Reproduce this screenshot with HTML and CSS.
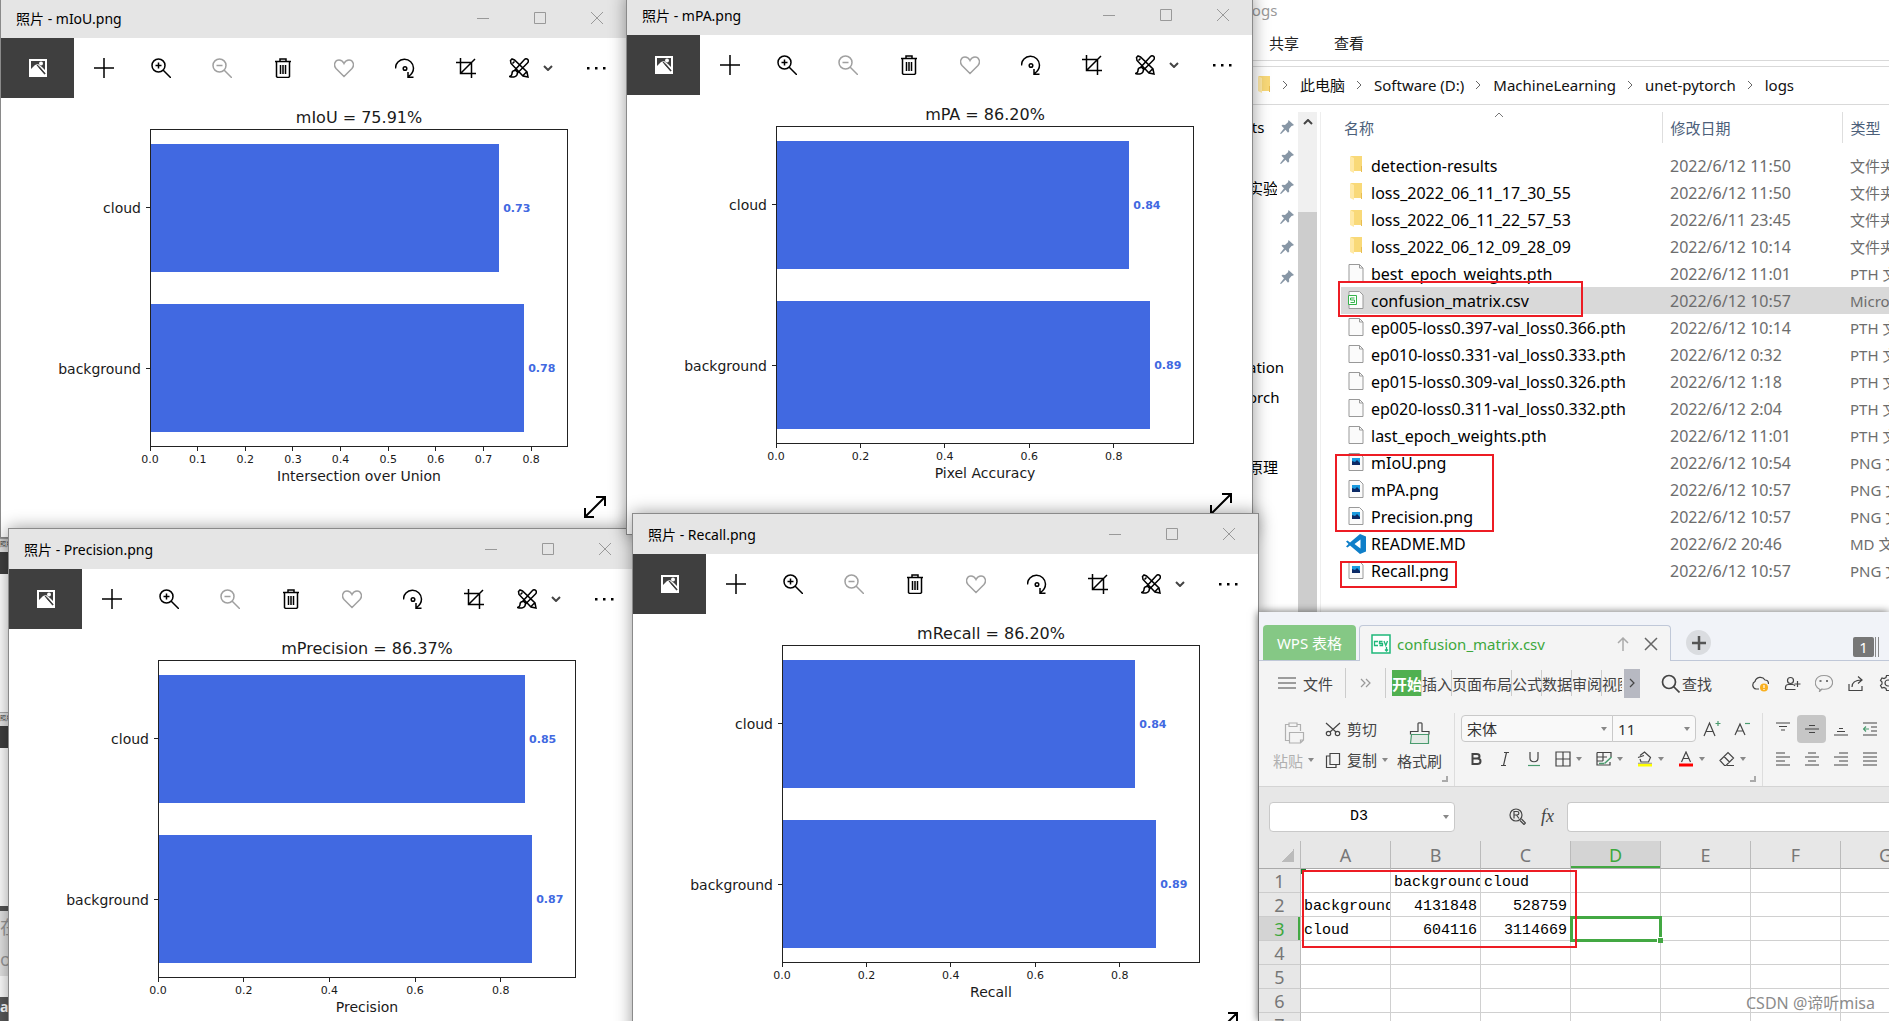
FILE: index.html
```html
<!DOCTYPE html>
<html lang="zh-CN">
  <head>
    <meta charset="UTF-8" />
    <meta name="viewport" content="width=device-width, initial-scale=1.0" />
    <title>logs</title>
    <link rel="stylesheet" href="styles.css">
  </head>
  <body>
    <!-- Shared icons -->
    <svg class="sprite" aria-hidden="true">
      <symbol id="i-min" viewBox="0 0 12 12"><path d="M0 6.5h12" /></symbol>
      <symbol id="i-max" viewBox="0 0 12 12"><path d="M.5.5h11v11H.5z" /></symbol>
      <symbol id="i-close" viewBox="0 0 12 12"><path d="M0 0l12 12M12 0L0 12" /></symbol>
      <symbol id="i-photo" viewBox="0 0 18 18">
        <path fill="#fff" stroke="none" d="M0 0h18v18H0z" />
        <path fill="#3f3f3f" stroke="none" d="M2 2h14v9l-3-3L9 5 6 6 2 10z" />
        <circle cx="12" cy="4.500" r="2" fill="#fff" stroke="none" />
        <path stroke="#3f3f3f" stroke-width="1.300" d="M8 6l8 9" />
        <path fill="#fff" stroke="none" d="M2 11l5-5 9 10H2z" />
        <path stroke="#3f3f3f" stroke-width="1.200" d="M10 8l6 7" />
      </symbol>
      <symbol id="i-plus" viewBox="0 0 20 20"><path d="M10 0v20M0 10h20" /></symbol>
      <symbol id="i-zoomin" viewBox="0 0 20 20"><circle cx="7.500" cy="7.500" r="6.500" /><path d="M12 12l8 8M4.500 7.500h6M7.500 4.500v6" /></symbol>
      <symbol id="i-zoomout" viewBox="0 0 20 20"><circle cx="7.500" cy="7.500" r="6.500" /><path d="M12 12l8 8M4.500 7.500h6" /></symbol>
      <symbol id="i-trash" viewBox="0 0 20 20"><path d="M2 3.500h16M7 3V1h6v2M3.500 4v14.500l1 1h11l1-1V4M7.500 7v9M10 7v9M12.500 7v9" /></symbol>
      <symbol id="i-heart" viewBox="0 0 20 20"><path d="M10 18.500L2 10.500C-1 7 1 2 5 2c2.500 0 4 1.500 5 3.500C11 3.500 12.500 2 15 2c4 0 6 5 3 8.500z" /></symbol>
      <symbol id="i-rotate" viewBox="0 0 20 20"><path d="M.5 10.500A9 9 0 0 1 18.500 10c0 4-2 6.500-5 8.500M13 14v5.200h5.500" /><circle cx="10" cy="10.500" r="1.800" /></symbol>
      <symbol id="i-crop" viewBox="0 0 20 20"><path d="M0 4.500h15.500V20M4.500 0v15.500H20M5 15L19 1" /></symbol>
      <symbol id="i-pens" viewBox="0 0 20 20"><path d="M1.500 2.500L3 1l2.500 1L18 14l1 5-5-1L2 5.500zM3.500 5.500l2-2M14 17.500l3.500-3.500M18 1c2 1 1.500 3 .5 4L9 14.500 6 12 15.500 1.500C16 1 17 .5 18 1zM6 12.500c-2 0-3 1-3 3 0 1.500-1 2.500-2.500 3 4 1.500 8 0 8-4" /></symbol>
      <symbol id="i-down" viewBox="0 0 10 6"><path d="M1 1l4 4 4-4" /></symbol>
      <symbol id="i-dots" viewBox="0 0 20 4"><path fill="currentColor" stroke="none" d="M1 1h2.500v2.500H1zM9 1h2.500v2.500H9zM17 1h2.500v2.500H17z" /></symbol>
      <symbol id="i-expand" viewBox="0 0 24 24"><path d="M2 22L22 2M13 2h9v9M11 22H2v-9" /></symbol>

      <symbol id="i-folder" viewBox="0 0 14 18"><path fill="#f9d978" stroke="none" d="M2 0h11v15H2z" /><path fill="#ffe9a6" stroke="none" d="M1 0l4 2v15l-4-2z" /><path fill="#e8bd52" stroke="none" d="M12 10h1v6h-1z" /></symbol>
      <symbol id="i-file" viewBox="0 0 16 18"><path fill="#fbfbfb" stroke="#999" d="M1 .5h10.500l3.500 3.500v13.500H1z" /><path stroke="#999" d="M11.500.5V4H15" /></symbol>
      <symbol id="i-csv" viewBox="0 0 16 18"><path fill="#fbfbfb" stroke="#999" d="M1 .5h10.500l3.500 3.500v13.500H1z" /><path fill="#fff" stroke="#35b34a" d="M.5 4.500h8v9h-8z" /><path stroke="#35b34a" d="M6.500 7h-4v2h4v2.500h-4" /></symbol>
      <symbol id="i-png" viewBox="0 0 16 18"><path fill="#fbfbfb" stroke="#999" d="M1 .5h10.500l3.500 3.500v13.500H1z" /><path fill="#1b9be0" stroke="none" d="M4 5h8v7H4z" /><path fill="#0c2a66" stroke="none" d="M4 12V8l3 1 2-2 3 3v2z" /></symbol>
      <symbol id="i-vscode" viewBox="0 0 20 20"><path fill="#0f7fc9" stroke="none" d="M14 0l6 2.500v15L14 20 4 11.500 1.500 13.500 0 12.500 2.500 10 0 7.500l1.500-1L4 8.500zM14.500 5.500L8.500 10l6 4.500z" /></symbol>
      <symbol id="i-pin" viewBox="0 0 14 14"><path fill="#8796a5" stroke="none" d="M8.500 0L14 5l-1.500.8-1 .2-2.500 3 .2 2.500L8 12.700 5.500 9.800 1 14l-1-.5L4 8.300 1.500 5.800l1-1 2.500.3 3-2.800z" /></symbol>
      <symbol id="i-right" viewBox="0 0 6 10"><path d="M1 1l4 4-4 4" /></symbol>
      <symbol id="i-up" viewBox="0 0 10 6"><path d="M1 5l4-4 4 4" /></symbol>
    </svg>

    <!-- Pieces of older windows at the left edge -->
    <div class="behind" aria-hidden="true">
      <div class="bar-light">照片</div>
      <div class="bar-dark"></div>
      <div class="blank"></div>
      <div class="bar-light">照片</div>
      <div class="bar-dark"></div>
      <div class="blank"></div>
      <div class="tip">在<br />ol</div>
      <div class="foot">ar</div>
    </div>

    <!-- File explorer -->
    <section class="window explorer">
      <header class="explorer-title">logs</header>
      <nav class="explorer-tabs">
        <button type="button">共享</button>
        <button type="button">查看</button>
      </nav>
      <nav class="crumbs">
        <svg class="folder"><use href="#i-folder" /></svg>
        <svg class="sep"><use href="#i-right" /></svg><a href="#">此电脑</a>
        <svg class="sep"><use href="#i-right" /></svg><a href="#">Software (D:)</a>
        <svg class="sep"><use href="#i-right" /></svg><a href="#">MachineLearning</a>
        <svg class="sep"><use href="#i-right" /></svg><a href="#">unet-pytorch</a>
        <svg class="sep"><use href="#i-right" /></svg><a href="#">logs</a>
      </nav>
      <div class="explorer-body">
        <ul class="quick">
          <li><span>lts</span><svg><use href="#i-pin" /></svg></li>
          <li><span></span><svg><use href="#i-pin" /></svg></li>
          <li><span>实验报告</span><svg><use href="#i-pin" /></svg></li>
          <li><span></span><svg><use href="#i-pin" /></svg></li>
          <li><span></span><svg><use href="#i-pin" /></svg></li>
          <li><span></span><svg><use href="#i-pin" /></svg></li>
          <li></li>
          <li></li>
          <li><span>ation</span></li>
          <li><span>orch</span></li>
          <li></li>
          <li class="last"><span>原理</span></li>
        </ul>
        <div class="scrollbar">
          <svg><use href="#i-up" /></svg>
          <div class="thumb"></div>
        </div>
        <div class="list">
          <svg class="sort"><use href="#i-up" /></svg>
          <table class="files">
            <thead>
              <tr><th class="col-name">名称</th><th class="col-date">修改日期</th><th>类型</th></tr>
            </thead>
            <tbody>
              <tr><td><svg><use href="#i-folder" /></svg>detection-results</td><td>2022/6/12 11:50</td><td>文件夹</td></tr>
              <tr><td><svg><use href="#i-folder" /></svg>loss_2022_06_11_17_30_55</td><td>2022/6/12 11:50</td><td>文件夹</td></tr>
              <tr><td><svg><use href="#i-folder" /></svg>loss_2022_06_11_22_57_53</td><td>2022/6/11 23:45</td><td>文件夹</td></tr>
              <tr><td><svg><use href="#i-folder" /></svg>loss_2022_06_12_09_28_09</td><td>2022/6/12 10:14</td><td>文件夹</td></tr>
              <tr><td><svg><use href="#i-file" /></svg>best_epoch_weights.pth</td><td>2022/6/12 11:01</td><td>PTH 文件</td></tr>
              <tr class="selected"><td><svg><use href="#i-csv" /></svg>confusion_matrix.csv</td><td>2022/6/12 10:57</td><td>Microsoft</td></tr>
              <tr><td><svg><use href="#i-file" /></svg>ep005-loss0.397-val_loss0.366.pth</td><td>2022/6/12 10:14</td><td>PTH 文件</td></tr>
              <tr><td><svg><use href="#i-file" /></svg>ep010-loss0.331-val_loss0.333.pth</td><td>2022/6/12 0:32</td><td>PTH 文件</td></tr>
              <tr><td><svg><use href="#i-file" /></svg>ep015-loss0.309-val_loss0.326.pth</td><td>2022/6/12 1:18</td><td>PTH 文件</td></tr>
              <tr><td><svg><use href="#i-file" /></svg>ep020-loss0.311-val_loss0.332.pth</td><td>2022/6/12 2:04</td><td>PTH 文件</td></tr>
              <tr><td><svg><use href="#i-file" /></svg>last_epoch_weights.pth</td><td>2022/6/12 11:01</td><td>PTH 文件</td></tr>
              <tr><td><svg><use href="#i-png" /></svg>mIoU.png</td><td>2022/6/12 10:54</td><td>PNG 文件</td></tr>
              <tr><td><svg><use href="#i-png" /></svg>mPA.png</td><td>2022/6/12 10:57</td><td>PNG 文件</td></tr>
              <tr><td><svg><use href="#i-png" /></svg>Precision.png</td><td>2022/6/12 10:57</td><td>PNG 文件</td></tr>
              <tr><td><svg class="wide"><use href="#i-vscode" /></svg>README.MD</td><td>2022/6/2 20:46</td><td>MD 文件</td></tr>
              <tr><td><svg><use href="#i-png" /></svg>Recall.png</td><td>2022/6/12 10:57</td><td>PNG 文件</td></tr>
            </tbody>
          </table>
          <div class="mark mark-csv"></div>
          <div class="mark mark-images"></div>
          <div class="mark mark-recall"></div>
        </div>
      </div>
    </section>

    <!-- Photo viewers -->
    <section class="window photo photo-miou">
      <header class="titlebar">
        <h2>照片 - mIoU.png</h2>
        <button type="button" aria-label="Minimize"><svg><use href="#i-min" /></svg></button>
        <button type="button" aria-label="Maximize"><svg><use href="#i-max" /></svg></button>
        <button type="button" aria-label="Close"><svg><use href="#i-close" /></svg></button>
      </header>
      <div class="toolbar">
        <button type="button" class="tile" aria-label="View"><svg><use href="#i-photo" /></svg></button>
        <button type="button" class="add" aria-label="Add"><svg><use href="#i-plus" /></svg></button>
        <button type="button" aria-label="Zoom in"><svg><use href="#i-zoomin" /></svg></button>
        <button type="button" class="off" aria-label="Zoom out"><svg><use href="#i-zoomout" /></svg></button>
        <button type="button" aria-label="Delete"><svg><use href="#i-trash" /></svg></button>
        <button type="button" class="off" aria-label="Favorite"><svg><use href="#i-heart" /></svg></button>
        <button type="button" aria-label="Rotate"><svg><use href="#i-rotate" /></svg></button>
        <button type="button" aria-label="Crop"><svg><use href="#i-crop" /></svg></button>
        <button type="button" class="edit" aria-label="Edit"><svg><use href="#i-pens" /></svg><svg class="down"><use href="#i-down" /></svg></button>
        <button type="button" class="more" aria-label="More"><svg><use href="#i-dots" /></svg></button>
      </div>
      <figure class="chart">
        <figcaption>mIoU = 75.91%</figcaption>
        <div class="y-axis"><span>cloud</span><span>background</span></div>
        <div class="plot">
          <div class="row"><div class="bar" style="width: 83.7%"></div><b>0.73</b></div>
          <div class="row"><div class="bar" style="width: 89.7%"></div><b>0.78</b></div>
        </div>
        <div class="x-axis" style="--step: 11.4%"><span>0.0</span><span>0.1</span><span>0.2</span><span>0.3</span><span>0.4</span><span>0.5</span><span>0.6</span><span>0.7</span><span>0.8</span></div>
        <p>Intersection over Union</p>
      </figure>
      <button type="button" class="expand" aria-label="Full screen"><svg><use href="#i-expand" /></svg></button>
    </section>

    <section class="window photo photo-precision">
      <header class="titlebar">
        <h2>照片 - Precision.png</h2>
        <button type="button" aria-label="Minimize"><svg><use href="#i-min" /></svg></button>
        <button type="button" aria-label="Maximize"><svg><use href="#i-max" /></svg></button>
        <button type="button" aria-label="Close"><svg><use href="#i-close" /></svg></button>
      </header>
      <div class="toolbar">
        <button type="button" class="tile" aria-label="View"><svg><use href="#i-photo" /></svg></button>
        <button type="button" class="add" aria-label="Add"><svg><use href="#i-plus" /></svg></button>
        <button type="button" aria-label="Zoom in"><svg><use href="#i-zoomin" /></svg></button>
        <button type="button" class="off" aria-label="Zoom out"><svg><use href="#i-zoomout" /></svg></button>
        <button type="button" aria-label="Delete"><svg><use href="#i-trash" /></svg></button>
        <button type="button" class="off" aria-label="Favorite"><svg><use href="#i-heart" /></svg></button>
        <button type="button" aria-label="Rotate"><svg><use href="#i-rotate" /></svg></button>
        <button type="button" aria-label="Crop"><svg><use href="#i-crop" /></svg></button>
        <button type="button" class="edit" aria-label="Edit"><svg><use href="#i-pens" /></svg><svg class="down"><use href="#i-down" /></svg></button>
        <button type="button" class="more" aria-label="More"><svg><use href="#i-dots" /></svg></button>
      </div>
      <figure class="chart">
        <figcaption>mPrecision = 86.37%</figcaption>
        <div class="y-axis"><span>cloud</span><span>background</span></div>
        <div class="plot">
          <div class="row"><div class="bar" style="width: 88%"></div><b>0.85</b></div>
          <div class="row"><div class="bar" style="width: 89.7%"></div><b>0.87</b></div>
        </div>
        <div class="x-axis" style="--step: 20.5%"><span>0.0</span><span>0.2</span><span>0.4</span><span>0.6</span><span>0.8</span></div>
        <p>Precision</p>
      </figure>
    </section>

    <section class="window photo photo-mpa">
      <header class="titlebar">
        <h2>照片 - mPA.png</h2>
        <button type="button" aria-label="Minimize"><svg><use href="#i-min" /></svg></button>
        <button type="button" aria-label="Maximize"><svg><use href="#i-max" /></svg></button>
        <button type="button" aria-label="Close"><svg><use href="#i-close" /></svg></button>
      </header>
      <div class="toolbar">
        <button type="button" class="tile" aria-label="View"><svg><use href="#i-photo" /></svg></button>
        <button type="button" class="add" aria-label="Add"><svg><use href="#i-plus" /></svg></button>
        <button type="button" aria-label="Zoom in"><svg><use href="#i-zoomin" /></svg></button>
        <button type="button" class="off" aria-label="Zoom out"><svg><use href="#i-zoomout" /></svg></button>
        <button type="button" aria-label="Delete"><svg><use href="#i-trash" /></svg></button>
        <button type="button" class="off" aria-label="Favorite"><svg><use href="#i-heart" /></svg></button>
        <button type="button" aria-label="Rotate"><svg><use href="#i-rotate" /></svg></button>
        <button type="button" aria-label="Crop"><svg><use href="#i-crop" /></svg></button>
        <button type="button" class="edit" aria-label="Edit"><svg><use href="#i-pens" /></svg><svg class="down"><use href="#i-down" /></svg></button>
        <button type="button" class="more" aria-label="More"><svg><use href="#i-dots" /></svg></button>
      </div>
      <figure class="chart">
        <figcaption>mPA = 86.20%</figcaption>
        <div class="y-axis"><span>cloud</span><span>background</span></div>
        <div class="plot">
          <div class="row"><div class="bar" style="width: 84.7%"></div><b>0.84</b></div>
          <div class="row"><div class="bar" style="width: 89.7%"></div><b>0.89</b></div>
        </div>
        <div class="x-axis" style="--step: 20.2%"><span>0.0</span><span>0.2</span><span>0.4</span><span>0.6</span><span>0.8</span></div>
        <p>Pixel Accuracy</p>
      </figure>
      <button type="button" class="expand" aria-label="Full screen"><svg><use href="#i-expand" /></svg></button>
    </section>

    <section class="window photo photo-recall">
      <header class="titlebar">
        <h2>照片 - Recall.png</h2>
        <button type="button" aria-label="Minimize"><svg><use href="#i-min" /></svg></button>
        <button type="button" aria-label="Maximize"><svg><use href="#i-max" /></svg></button>
        <button type="button" aria-label="Close"><svg><use href="#i-close" /></svg></button>
      </header>
      <div class="toolbar">
        <button type="button" class="tile" aria-label="View"><svg><use href="#i-photo" /></svg></button>
        <button type="button" class="add" aria-label="Add"><svg><use href="#i-plus" /></svg></button>
        <button type="button" aria-label="Zoom in"><svg><use href="#i-zoomin" /></svg></button>
        <button type="button" class="off" aria-label="Zoom out"><svg><use href="#i-zoomout" /></svg></button>
        <button type="button" aria-label="Delete"><svg><use href="#i-trash" /></svg></button>
        <button type="button" class="off" aria-label="Favorite"><svg><use href="#i-heart" /></svg></button>
        <button type="button" aria-label="Rotate"><svg><use href="#i-rotate" /></svg></button>
        <button type="button" aria-label="Crop"><svg><use href="#i-crop" /></svg></button>
        <button type="button" class="edit" aria-label="Edit"><svg><use href="#i-pens" /></svg><svg class="down"><use href="#i-down" /></svg></button>
        <button type="button" class="more" aria-label="More"><svg><use href="#i-dots" /></svg></button>
      </div>
      <figure class="chart">
        <figcaption>mRecall = 86.20%</figcaption>
        <div class="y-axis"><span>cloud</span><span>background</span></div>
        <div class="plot">
          <div class="row"><div class="bar" style="width: 84.7%"></div><b>0.84</b></div>
          <div class="row"><div class="bar" style="width: 89.7%"></div><b>0.89</b></div>
        </div>
        <div class="x-axis" style="--step: 20.2%"><span>0.0</span><span>0.2</span><span>0.4</span><span>0.6</span><span>0.8</span></div>
        <p>Recall</p>
      </figure>
      <button type="button" class="expand" aria-label="Full screen"><svg><use href="#i-expand" /></svg></button>
    </section>

    <!-- WPS spreadsheet -->
    <section class="window wps">
      <header class="wps-tabs">
        <button type="button" class="home-tab">WPS 表格</button>
        <div class="doc-tab">
          <svg width="20" height="20" viewBox="0 0 20 20"><path fill="#fff" stroke="#1fb87a" stroke-width="1.500" d="M1 1h18v18H1z" /><path stroke="#1fb87a" stroke-width="1.300" d="M7 7.500H3.500v4H7M11.500 7.500H8.500v2h3v2h-3M13 7l1.800 4.500L16.500 7M15.500 13v4M14 15.500l1.500 1.500 1.500-1.500" /></svg>
          <span>confusion_matrix.csv</span>
          <button type="button" aria-label="Float"><svg width="12" height="14" viewBox="0 0 12 14"><path stroke="#aaa" stroke-width="1.500" d="M6 14V1M1 6l5-5 5 5" /></svg></button>
          <button type="button" aria-label="Close"><svg width="14" height="14" viewBox="0 0 14 14"><path stroke="#666" stroke-width="1.500" d="M1 1l12 12M13 1L1 13" /></svg></button>
        </div>
        <button type="button" class="new-tab" aria-label="New"><svg width="16" height="16" viewBox="0 0 16 16"><path stroke="#555" stroke-width="2.500" d="M8 1v14M1 8h14" /></svg></button>
        <span class="count">1</span>
        <span class="count-edge"></span>
      </header>

      <nav class="menu">
        <button type="button" class="file-menu"><svg width="18" height="12" viewBox="0 0 18 12"><path d="M0 1h18M0 6h18M0 11h18" /></svg>文件</button>
        <button type="button" class="quick-more" aria-label="More"><svg width="12" height="10" viewBox="0 0 12 10"><path stroke="#999" d="M1 1l4 4-4 4M6 1l4 4-4 4" /></svg></button>
        <div class="ribbon-tabs">
          <button type="button" class="current">开始</button>
          <button type="button">插入</button>
          <button type="button">页面布局</button>
          <button type="button">公式</button>
          <button type="button">数据</button>
          <button type="button">审阅</button>
          <button type="button">视图</button>
        </div>
        <button type="button" class="tabs-next" aria-label="Next"><svg width="6" height="10"><use href="#i-right" /></svg></button>
        <button type="button" class="find"><svg width="19" height="19" viewBox="0 0 19 19"><circle cx="8" cy="8" r="6.500" stroke-width="1.700" /><path stroke-width="1.700" d="M12.500 12.500l6 6" /></svg>查找</button>
        <div class="menu-icons">
          <svg viewBox="0 0 18 18"><path d="M8 15H5a4 4 0 0 1-1-7.500A5.500 5.500 0 0 1 14 6c2.500 0 3.500 2 3.500 4" /><circle cx="13" cy="13.500" r="4" fill="#f9b020" stroke="none" /><path stroke="#fff" d="M13 11v3M13 15v1" /></svg>
          <svg viewBox="0 0 18 18"><circle cx="7.500" cy="6.500" r="3" /><path d="M2.500 15.500v-2c0-2 1.500-3 3-3h4c1 0 2 .5 2.500 1.500M2.500 15.500h10M14.500 7v6M11.500 10h6" /></svg>
          <svg viewBox="0 0 18 18"><path stroke="#999" d="M5 15.500C-3 11 0 1.500 9 1.500s11.500 9 4.500 13c-2.500 1-4 1-6.500.5L4.500 17.500z" /><path stroke="#777" stroke-width="2" d="M5.500 6v2M12 6v2" /></svg>
          <svg viewBox="0 0 18 18"><path d="M2 10v6.500h13V12M5 13c0-5 4-7 9.500-7M11 2.500L15 6l-4 3.500" /></svg>
          <svg viewBox="0 0 18 18"><circle cx="9" cy="9" r="3" /><path d="M7.500 1.500h3l.5 2 2 1 2-.5 1.500 2.500-1.500 1.500v2l1.500 1.500-1.500 2.500-2-.5-2 1-.5 2h-3l-.5-2-2-1-2 .5-1.500-2.500L3 10V8L1.500 6.500 3 4l2 .5 2-1z" /></svg>
        </div>
      </nav>

      <div class="ribbon">
        <button type="button" class="big off"><svg viewBox="0 0 22 22"><path d="M6 18.500H2.500v-16H6M14 2.500h3.500V9M6 1h8v3.500H6zM6.500 10.500h14v7.500l-3 3H6.500zM17.500 21v-3h3" /></svg><span class="drop">粘贴</span></button>
        <div class="stack">
          <button type="button"><svg viewBox="0 0 16 16"><circle cx="3.500" cy="12.500" r="2.200" /><circle cx="12.500" cy="12.500" r="2.200" /><path d="M1 2l10 9M15 2L5 11" /></svg>剪切</button>
          <button type="button"><svg viewBox="0 0 16 16"><path d="M5 1.500h9.500v11H5zM4.500 4H1.500v11.500h9.500V13" /></svg><span class="drop">复制</span></button>
        </div>
        <button type="button" class="big"><svg viewBox="0 0 22 22"><path fill="#e4ebe6" stroke="#4a9b6e" d="M2.500 12.500h17v9h-18z" /><path d="M1.500 12.500V9.500h7.500V1.500c0-1 4-1 4 0v8h7v3" /></svg>格式刷</button>
        <i class="corner"></i>
        <div class="group fonts">
          <div class="line">
            <label class="pick pick-font"><select aria-label="Font"><option>宋体</option></select></label>
            <label class="pick pick-size"><select aria-label="Font size"><option>11</option></select></label>
            <button type="button" class="grow" aria-label="Grow font"><svg viewBox="0 0 18 18"><path d="M1 16L6.500 3 12 16M3 11.500h7" /><path stroke="#4a9b6e" d="M15 1v5M12.500 3.500h5" /></svg></button>
            <button type="button" class="grow" aria-label="Shrink font"><svg viewBox="0 0 18 18"><path d="M2 15L7 4l5 11M4 11h6" /><path stroke="#4a9b6e" d="M12 3.500h5" /></svg></button>
          </div>
          <div class="line tools">
            <button type="button" aria-label="Bold"><svg viewBox="0 0 16 16"><path class="heavy" d="M4.500 3h4c4 0 4 4.500 0 4.500h-4zM4.500 7.500h5c4 0 4 5.500 0 5.500h-5z" /></svg></button>
            <button type="button" aria-label="Italic"><svg viewBox="0 0 16 16"><path d="M7 1.500h5M4 14.500h5M9.500 1.500l-3 13" /></svg></button>
            <button type="button" aria-label="Underline"><svg viewBox="0 0 16 16"><path d="M4 1v6c0 5 8 5 8 0V1" /><path stroke="#4a9b6e" d="M2 14.500h12" /></svg></button>
            <button type="button" class="drop" aria-label="Borders"><svg viewBox="0 0 16 16"><path d="M1 1h14v14H1zM8 1v14M1 8h14" /></svg></button>
            <button type="button" class="drop" aria-label="Draw border"><svg viewBox="0 0 16 16"><path d="M1 1.500h14V6M1 1.500V14h13v-3M1 6h10M7 2v8M1 10h6" /><path stroke="#4a9b6e" stroke-width="1.500" d="M15.500 6l-7 6.500M3 12.500h5" /></svg></button>
            <button type="button" class="drop" aria-label="Fill color"><svg viewBox="0 0 16 16"><path d="M3 4.500L7.500 1l6 5.500-2 4.500H4L3 8M1 6.500l6-2" /><path stroke="#ff0" stroke-width="3" d="M1 14h14" /><path stroke="#aa9" d="M1 12.300h14" /></svg></button>
            <button type="button" class="drop" aria-label="Font color"><svg viewBox="0 0 16 16"><path d="M3.500 11L8 1l4.500 10M5 7.500h6" /><path stroke="red" stroke-width="3" d="M1 14h14" /></svg></button>
            <button type="button" class="drop" aria-label="Clear"><svg viewBox="0 0 16 16"><path d="M1 9.500L9 1.500l5.500 5.500-7.500 7.500H5.500zM5 5.500l5.500 5.500M8 14.500h7" /></svg></button>
          </div>
        </div>
        <i class="corner"></i>
        <div class="group aligns">
          <button type="button" aria-label="Top"><svg viewBox="0 0 14 14"><path d="M0 1h14M3 4.500h8M5 8h4" /></svg></button>
          <button type="button" class="on" aria-label="Middle"><svg viewBox="0 0 14 14"><path d="M4 3.500h6M0 7h14M4 10.500h6" /></svg></button>
          <button type="button" aria-label="Bottom"><svg viewBox="0 0 14 14"><path d="M5 6.500h4M3 9.500h8M0 13h14" /></svg></button>
          <button type="button" aria-label="Indent"><svg viewBox="0 0 14 14"><path d="M0 1h14M8 5h6M8 9h6M0 13h14" /><path stroke="#4a9b6e" d="M0 7h6M3 4.500L.5 7 3 9.500" /></svg></button>
          <button type="button" aria-label="Align left"><svg viewBox="0 0 14 14"><path d="M0 1h9M0 5h14M0 9h9M0 13h14" /></svg></button>
          <button type="button" aria-label="Center"><svg viewBox="0 0 14 14"><path d="M3 1h8M0 5h14M3 9h8M0 13h14" /></svg></button>
          <button type="button" aria-label="Align right"><svg viewBox="0 0 14 14"><path d="M5 1h9M0 5h14M5 9h9M0 13h14" /></svg></button>
          <button type="button" aria-label="Justify"><svg viewBox="0 0 14 14"><path d="M0 1h14M0 5h14M0 9h14M0 13h14" /></svg></button>
        </div>
      </div>

      <div class="formula">
        <label class="pick cell-name"><input type="text" aria-label="Cell" value="D3" /></label>
        <svg width="17" height="17" viewBox="0 0 17 17"><circle cx="7" cy="7" r="6" /><path d="M5 10.500v-7h3c2.500 0 2.500 3.500 0 3.500H5M7.500 7l2.500 3.500" /><path d="M11 12.500l4 4 1.500-1.500-4-4" /></svg>
        <em>fx</em>
        <input type="text" class="formula-input" aria-label="Formula" />
      </div>

      <div class="sheet-wrap">
        <table class="sheet">
          <thead>
            <tr><th class="all"></th><th>A</th><th>B</th><th>C</th><th class="active">D</th><th>E</th><th>F</th><th>G</th></tr>
          </thead>
          <tbody>
            <tr><th>1</th><td class="flag"></td><td>background</td><td>cloud</td><td></td><td></td><td></td><td></td></tr>
            <tr><th>2</th><td>background</td><td class="num">4131848</td><td class="num">528759</td><td></td><td></td><td></td><td></td></tr>
            <tr><th class="active">3</th><td>cloud</td><td class="num">604116</td><td class="num">3114669</td><td class="cursor"></td><td></td><td></td><td></td></tr>
            <tr><th>4</th><td></td><td></td><td></td><td></td><td></td><td></td><td></td></tr>
            <tr><th>5</th><td></td><td></td><td></td><td></td><td></td><td></td><td></td></tr>
            <tr><th>6</th><td></td><td></td><td></td><td></td><td></td><td></td><td></td></tr>
            <tr><th>7</th><td></td><td></td><td></td><td></td><td></td><td></td><td></td></tr>
          </tbody>
        </table>
        <div class="mark mark-matrix"></div>
      </div>
    </section>

    <div class="watermark">CSDN @谛听misa</div>
  </body>
</html>
```
FILE: styles.css
```css
* {
  margin: 0;
  padding: 0;
  box-sizing: border-box;
}

body {
  position: relative;
  height: 100vh;
  overflow: hidden;
  background-color: #7b828c;
  color: #000;
  font-family: "Noto Sans", "Noto Sans CJK SC", sans-serif;
  font-size: 15px;
}

button {
  border: none;
  background: none;
  color: inherit;
  font: inherit;
}

svg {
  display: block;
  flex: none;
  fill: none;
  stroke: currentColor;
}

.sprite {
  position: absolute;
  width: 0;
  height: 0;
}

.window {
  position: absolute;
  background-color: #fff;
  overflow: hidden;
}

/* Red boxes drawn over the windows */
.mark {
  position: absolute;
  border: 2px solid #ed1c24;
}

/* Left edge */
.behind {
  position: absolute;
  left: 0;
  top: 538px;
  bottom: 0;
  width: 12px;
  overflow: hidden;
  background-color: #fff;
  display: flex;
  flex-direction: column;
}

.behind .bar-light {
  height: 14px;
  border-top: 1px solid #aaa;
  background-color: #e5e5e5;
  color: #444;
  font-size: 6px;
}

.behind .bar-dark {
  height: 22px;
  background-color: #3f3f3f;
}

.behind .blank {
  height: 138px;
}

.behind .tip {
  height: 70px;
  margin-top: 20px;
  border-top: 5px solid #555;
  background-color: #e4e4e4;
  color: #999;
  font-size: 18px;
  line-height: 32px;
}

.behind .foot {
  margin-top: auto;
  height: 24px;
  background-color: #5a5a5a;
  color: #fff;
  font-size: 14px;
  font-weight: bold;
}

/* Explorer */
.explorer {
  left: 1248px;
  right: 0;
  top: 0;
  height: 640px;
  display: flex;
  flex-direction: column;
}

.explorer-title {
  height: 24px;
  line-height: 20px;
  color: #999;
}

.explorer-tabs {
  height: 37px;
  padding: 0 21px;
  display: flex;
  align-items: center;
  gap: 35px;
  border-bottom: 1px solid #d9d9d9;
  color: #222;
}

.crumbs {
  height: 39px;
  margin-top: 5px;
  padding: 0 0 2px 9px;
  display: flex;
  align-items: center;
  border-top: 1px solid #d9d9d9;
  border-bottom: 1px solid #d9d9d9;
}

.crumbs .folder {
  width: 14px;
  height: 18px;
}

.crumbs .sep {
  width: 6px;
  height: 10px;
  margin: 0 12px 0 11px;
  color: #666;
}

.crumbs a {
  color: #111;
  text-decoration: none;
  white-space: nowrap;
}

.explorer-body {
  flex: 1;
  display: flex;
  padding-top: 7px;
}

.quick {
  width: 50px;
  list-style: none;
}

.quick li {
  height: 30px;
  padding-right: 4px;
  display: flex;
  align-items: center;
  justify-content: space-between;
  white-space: nowrap;
}

.quick li.last {
  height: 48px;
}

.quick span {
  width: 29px;
}

.quick li:has(svg) span {
  overflow: hidden;
}

.quick svg {
  width: 14px;
  height: 14px;
}

.scrollbar {
  width: 19px;
  background-color: #f0f0f0;
}

.scrollbar svg {
  width: 10px;
  height: 6px;
  margin: 7px auto;
  color: #444;
  stroke-width: 2px;
}

.scrollbar .thumb {
  height: 100%;
  margin-top: 87px;
  background-color: #cdcdcd;
}

.list {
  position: relative;
  flex: 1;
  margin-left: 3px;
  border-left: 1px solid #eee;
  overflow: hidden;
}

.sort {
  position: absolute;
  left: 173px;
  top: 0;
  width: 10px;
  height: 6px;
  color: #777;
}

.files {
  width: calc(100% - 20px);
  margin-left: 20px;
  table-layout: fixed;
  border-collapse: collapse;
  white-space: nowrap;
}

.files th {
  height: 31px;
  padding-left: 8px;
  border-left: 1px solid #dedede;
  text-align: left;
  font-weight: normal;
  color: #4c607a;
}

.files th.col-name {
  width: 321px;
  padding-left: 3px;
  border-left: none;
}

.files th.col-date {
  width: 180px;
}

.files td {
  height: 27px;
  padding-left: 8px;
  color: #6d6d6d;
  line-height: 20px;
  overflow: hidden;
}

.files tbody::before {
  content: "";
  display: block;
  height: 9px;
}

.files td:nth-child(-n + 2) {
  font-size: 16px;
}

.files td:first-child {
  padding-left: 7px;
  color: #000;
}

.files td svg {
  float: left;
  width: 16px;
  height: 18px;
  margin-right: 7px;
}

.files td svg.wide {
  width: 20px;
  height: 20px;
  margin: 0 5px 0 -2px;
}

.files .selected {
  background-color: #d9d9d9;
}

.mark-csv {
  left: 17px;
  top: 169px;
  width: 245px;
  height: 36px;
}

.mark-images {
  left: 14px;
  top: 342px;
  width: 159px;
  height: 78px;
}

.mark-recall {
  left: 19px;
  top: 449px;
  width: 117px;
  height: 27px;
}

/* Photo windows */
.photo {
  width: 627px;
  height: 541px;
  border: 1px solid #8a8a8a;
  box-shadow: 0 0 16px rgba(0, 0, 0, 0.4);
}

.photo-miou {
  left: 0;
  top: -3px;
}

.photo-precision {
  left: 8px;
  top: 528px;
}

.photo-mpa {
  left: 626px;
  top: -6px;
}

.photo-recall {
  left: 632px;
  top: 513px;
}

.titlebar {
  height: 40px;
  padding: 0 1px 0 15px;
  display: flex;
  background-color: #e5e5e5;
}

.titlebar h2 {
  flex: 1;
  font-size: 14px;
  font-weight: normal;
  line-height: 42px;
}

.titlebar button {
  width: 57px;
  display: flex;
  align-items: center;
  justify-content: center;
  color: #999;
}

.titlebar svg {
  width: 12px;
  height: 12px;
}

.toolbar {
  height: 60px;
  display: flex;
}

.toolbar button {
  width: 61px;
  display: flex;
  align-items: center;
  justify-content: center;
}

.toolbar svg {
  width: 20px;
  height: 20px;
  stroke-width: 1.5px;
}

.toolbar .tile {
  width: 73px;
  background-color: #3f3f3f;
}

.toolbar .tile svg {
  width: 18px;
  height: 18px;
}

.toolbar .add {
  width: 56px;
  padding-left: 4px;
}

.toolbar .off {
  color: #a0a0a0;
}

.toolbar .edit {
  margin-left: 4px;
  gap: 14px;
}

.toolbar .down {
  width: 10px;
  height: 6px;
  stroke-width: 2px;
  color: #444;
}

.toolbar .more {
  margin-left: auto;
}

.toolbar .more svg {
  height: 4px;
}

.chart {
  padding: 10px 58px 0 8px;
  display: grid;
  grid-template-columns: 141px 1fr;
  font-family: "DejaVu Sans", sans-serif;
  font-size: 14px;
  color: #1a1a1a;
}

.chart figcaption {
  grid-column: 2;
  margin-bottom: 1px;
  font-size: 16px;
  line-height: 20px;
  text-align: center;
}

.y-axis,
.plot {
  height: 318px;
  padding: 14px 0;
  display: flex;
  flex-direction: column;
  gap: 32px;
}

.y-axis span {
  flex: 1;
  display: flex;
  align-items: center;
  justify-content: flex-end;
  gap: 5px;
}

.y-axis span::after {
  content: "";
  width: 4px;
  height: 1px;
  background-color: #222;
}

.plot {
  border: 1px solid #222;
}

.plot .row {
  flex: 1;
  display: flex;
  align-items: center;
}

.plot .bar {
  height: 100%;
  background-color: #4169e1;
}

.plot b {
  padding-left: 4px;
  font-size: 11px;
  color: #4169e1;
}

.x-axis {
  grid-column: 2;
  display: flex;
  font-size: 11px;
  line-height: 16px;
}

.x-axis span {
  width: var(--step);
  flex: none;
  text-align: center;
}

.x-axis span:first-child {
  margin-left: calc(var(--step) / -2);
}

.x-axis span::before {
  content: "";
  display: block;
  width: 1px;
  height: 4px;
  margin: 0 auto 1px;
  background-color: #222;
}

.chart p {
  grid-column: 2;
  line-height: 17px;
  text-align: center;
}

.expand {
  position: absolute;
  right: 19px;
  bottom: 18px;
}

.expand svg {
  width: 24px;
  height: 24px;
  stroke-width: 2px;
}

/* WPS */
.wps {
  left: 1258px;
  right: 0;
  top: 612px;
  bottom: 0;
  border-left: 1px solid #777;
  background-color: #e7e7e7;
  box-shadow: 0 0 8px rgba(0, 0, 0, 0.6);
  color: #444;
  display: flex;
  flex-direction: column;
}

.wps svg {
  stroke-width: 1.2px;
}

.wps .heavy {
  stroke-width: 2px;
}

.wps button,
.drop {
  display: flex;
  align-items: center;
  justify-content: center;
  white-space: nowrap;
}

.drop::after,
.pick::after {
  content: "";
  border: 3px solid transparent;
  border-top: 4px solid #888;
  border-bottom: none;
}

.wps-tabs {
  height: 49px;
  padding: 13px 10px 0 4px;
  display: flex;
  background-color: #f1f3f8;
  box-shadow: inset 0 -1px #c0c8d8;
}

.home-tab {
  width: 93px;
  margin-bottom: 1px;
  border-radius: 4px 4px 0 0;
}

.wps .home-tab {
  background-color: #85c885;
  color: #fff;
}

.doc-tab {
  width: 312px;
  margin-left: 3px;
  padding: 0 5px 0 11px;
  display: flex;
  align-items: center;
  border: 1px solid #c0c8d8;
  border-bottom: none;
  border-radius: 4px 4px 0 0;
  background-color: #f4f4f4;
  color: #3da83d;
}

.doc-tab span {
  flex: 1;
  padding-left: 6px;
}

.doc-tab button {
  width: 28px;
}

.new-tab {
  width: 25px;
  height: 25px;
  margin: 5px 0 0 15px;
  border-radius: 50%;
}

.wps .new-tab {
  background-color: #dadce0;
}

.count {
  width: 21px;
  height: 20px;
  margin: 12px 1px 0 auto;
  border-radius: 2px;
  background-color: #777;
  color: #fff;
  line-height: 20px;
  text-align: center;
}

.count-edge {
  width: 4px;
  height: 20px;
  margin-top: 12px;
  border: 1px solid #888;
  border-width: 0 1px;
}

.menu {
  height: 46px;
  padding: 0 0 2px 19px;
  display: flex;
  align-items: center;
  background-color: #f4f4f4;
}

.menu > * {
  flex: none;
}

.menu .file-menu {
  gap: 7px;
  height: 30px;
  padding-right: 12px;
  border-right: 1px solid #ccc;
}

.menu .quick-more {
  width: 40px;
  height: 30px;
  border-right: 1px solid #ccc;
}

.ribbon-tabs {
  width: 230px;
  margin-left: 6px;
  display: flex;
  overflow: hidden;
}

.ribbon-tabs button {
  flex: none;
  height: 26px;
  box-shadow: inset -1px 0 #ccc;
}

.ribbon-tabs .current {
  background-color: #50b050;
  color: #fff;
  font-weight: bold;
}

.tabs-next {
  width: 16px;
  height: 29px;
  margin-left: 2px;
}

.menu .tabs-next {
  background-color: #b7b9c2;
}

.menu .find {
  margin-left: 21px;
  gap: 2px;
}

.menu-icons {
  margin-left: 39px;
  display: flex;
  gap: 14px;
}

.menu-icons svg {
  width: 18px;
  height: 18px;
}

.ribbon {
  height: 80px;
  padding: 6px 0 0 14px;
  display: flex;
  border-bottom: 1px solid #d4d4d4;
  background-color: #f4f4f4;
}

.ribbon > * {
  flex: none;
}

.ribbon .big {
  height: 66px;
  flex-direction: column;
  gap: 6px;
}

.ribbon .big svg {
  width: 22px;
  height: 22px;
}

.ribbon .off {
  color: #b0b0b0;
}

.drop {
  gap: 5px;
}

.stack {
  margin: 0 9px 0 11px;
}

.stack button {
  height: 31px;
  gap: 6px;
}

.stack svg,
.tools svg {
  width: 16px;
  height: 16px;
}

.corner {
  width: 6px;
  height: 6px;
  margin: 63px 6px 0 0;
  border: solid #aaa;
  border-width: 0 2px 2px 0;
}

.group {
  height: 73px;
  padding-left: 6px;
  border-left: 1px solid #ddd;
}

.group.fonts {
  width: 296px;
  border-left-color: #ddd;
}

.line {
  height: 31px;
  display: flex;
  align-items: center;
}

.line > * {
  flex: none;
}

.pick {
  height: 27px;
  padding: 0 5px;
  display: flex;
  align-items: center;
  border: 1px solid #c9c9c9;
  border-radius: 4px;
  background-color: #f9f9f9;
}

.pick select,
.pick input {
  flex: 1;
  width: 0;
  border: none;
  appearance: none;
  background: none;
  color: #333;
  font: inherit;
}

.pick-font {
  width: 152px;
  border-radius: 4px 0 0 4px;
}

.pick-size {
  width: 84px;
  margin-left: -1px;
  border-radius: 0 4px 4px 0;
}

.grow {
  width: 29px;
  margin-left: 1px;
}

.grow svg {
  width: 18px;
  height: 18px;
}

.tools {
  height: 29px;
}

.tools button {
  width: 29px;
}

.tools .drop {
  width: 41px;
}

.aligns {
  padding: 2px 0 0 5px;
  display: grid;
  grid-template-columns: repeat(4, 29px);
  grid-template-rows: 28px 28px;
  row-gap: 2px;
}

.ribbon .on {
  border-radius: 4px;
  background-color: #c6c6c6;
}

.aligns svg {
  width: 14px;
  height: 14px;
}

.formula {
  height: 54px;
  padding: 9px 0 4px 10px;
  display: flex;
  align-items: center;
}

.pick.cell-name {
  width: 186px;
  height: 30px;
  background-color: #fff;
}

.cell-name input {
  text-align: center;
  color: #000;
  font-family: "Liberation Mono", monospace;
}

.formula svg {
  margin-left: 54px;
}

.formula em {
  width: 17px;
  margin: 0 9px 0 15px;
  font-family: "Liberation Serif", serif;
  font-size: 18px;
}

.formula-input {
  flex: 1;
  height: 30px;
  border: 1px solid #c9c9c9;
  border-right: none;
  border-radius: 4px 0 0 4px;
  background-color: #fff;
}

.sheet-wrap {
  position: relative;
  flex: 1;
  overflow: hidden;
}

.sheet {
  width: 672px;
  table-layout: fixed;
  border-collapse: separate;
  border-spacing: 0;
  background-color: #fff;
}

.sheet th {
  height: 24px;
  border-right: 1px solid #bbb;
  border-bottom: 1px solid #ccc;
  background-color: #e7e7e7;
  color: #777;
  font-size: 18px;
  font-weight: normal;
  line-height: 20px;
}

.sheet thead th {
  height: 28px;
  border-bottom-color: #aaa;
}

.sheet th.all {
  width: 42px;
  background: linear-gradient(135deg, transparent 50%, #bbb 50%) no-repeat 22px 8px / 13px 13px #e7e7e7;
}

.sheet th.active {
  background-color: #d4d4d4;
  color: #3da83d;
}

.sheet thead th.active {
  box-shadow: inset 0 -2px #43a843;
}

.sheet tbody th.active {
  box-shadow: inset -2px 0 #43a843;
}

.sheet td {
  height: 24px;
  padding: 4px 3px 0;
  border-right: 1px solid #d0d0d0;
  border-bottom: 1px solid #d0d0d0;
  overflow: hidden;
  color: #000;
  font-family: "Liberation Mono", monospace;
  font-size: 15px;
  line-height: 19px;
}

.sheet .num {
  text-align: right;
}

.sheet .flag {
  background: linear-gradient(135deg, #1c7a2c 4px, transparent 4px);
}

.sheet .cursor {
  position: relative;
  overflow: visible;
  outline: 3px solid #43a843;
  outline-offset: -2px;
}

.sheet .cursor::after {
  content: "";
  position: absolute;
  right: -3px;
  bottom: -3px;
  width: 5px;
  height: 5px;
  border: solid #fff;
  border-width: 1px 0 0 1px;
  box-sizing: content-box;
  background-color: #43a843;
}

.mark-matrix {
  left: 43px;
  top: 29px;
  width: 275px;
  height: 78px;
}

.watermark {
  position: absolute;
  right: 14px;
  bottom: 7px;
  color: #8c8c8c;
  font-size: 16px;
}
```
